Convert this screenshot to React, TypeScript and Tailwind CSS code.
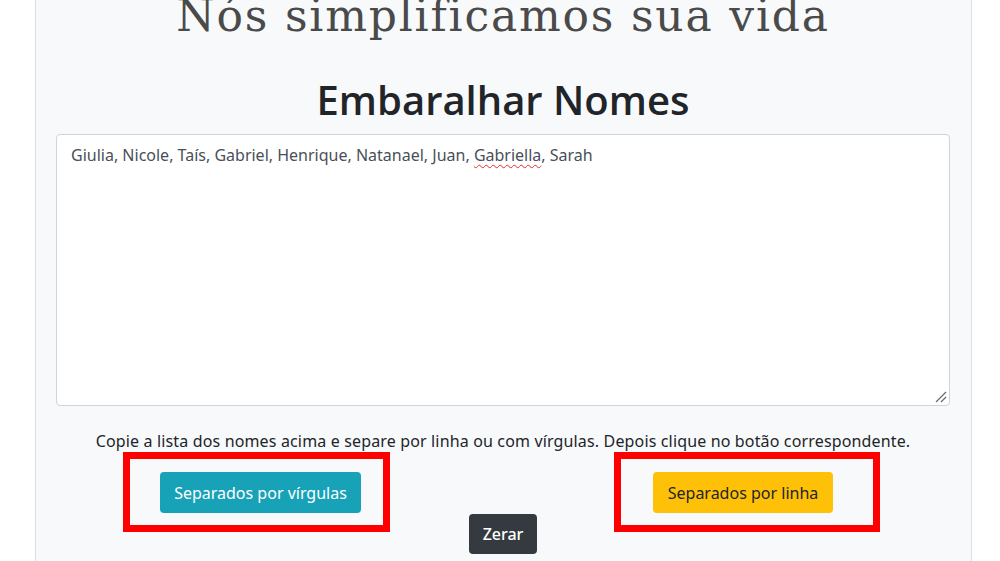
import React from "react";

export default function App() {
  return (
    <div className="w-[1000px] h-[561px] overflow-hidden bg-white">
      <div className="ml-[35px] w-[937px] h-[561px] bg-[#f8f9fa] border-x border-[#dcdfe2] pl-[20px] pr-[21px] flex flex-col">
        <h1
          className="mt-[-9px] h-[50px] leading-[50px] text-center text-[44px] tracking-[1.8px] text-[#4a4a4a] font-normal whitespace-nowrap"
          style={{ fontFamily: '"DejaVu Serif", "Liberation Serif", serif' }}
        >
          Nós simplificamos sua vida
        </h1>
        <h2
          className="mt-[34px] text-center text-[40px] leading-[50px] font-semibold text-[#212529]"
          style={{ fontFamily: '"Open Sans", "Noto Sans", sans-serif' }}
        >
          Embaralhar Nomes
        </h2>
        <div
          className="relative mt-[9px] h-[272px] bg-white border border-[#ced4da] rounded-[4px] px-[14px] pt-[8px] text-[16px] leading-[24px] text-[#495057]"
          style={{ fontFamily: '"Noto Sans", "Open Sans", sans-serif' }}
        >
          Giulia, Nicole, Taís, Gabriel, Henrique, Natanael, Juan,{" "}
          <span className="underline decoration-wavy decoration-[#e03030] decoration-1 underline-offset-[3px]">
            Gabriella
          </span>
          , Sarah
          <svg
            className="absolute right-[2px] bottom-[2px]"
            width="12"
            height="12"
            viewBox="0 0 12 12"
          >
            <line x1="11" y1="1" x2="1" y2="11" stroke="#6b6b6b" strokeWidth="1.2" />
            <line x1="11" y1="6" x2="6" y2="11" stroke="#6b6b6b" strokeWidth="1.2" />
          </svg>
        </div>
        <p
          className="mt-[23px] text-center text-[16px] tracking-[0.15px] leading-[24px] text-[#212529] whitespace-nowrap"
          style={{ fontFamily: '"Noto Sans", "Open Sans", sans-serif' }}
        >
          Copie a lista dos nomes acima e separe por linha ou com vírgulas. Depois clique no botão correspondente.
        </p>
        <div
          className="mt-[19px] flex flex-row items-start"
          style={{ fontFamily: '"Noto Sans", "Open Sans", sans-serif' }}
        >
          <div className="relative ml-[104px]">
            <button className="w-[201px] h-[41px] rounded-[4px] bg-[#17a2b8] text-white text-[16px]">
              Separados por vírgulas
            </button>
            <div className="absolute left-[-37px] top-[-20px] w-[267px] h-[80px] border-[7px] border-[#ff0000] pointer-events-none" />
          </div>
          <div className="relative ml-[292px]">
            <button className="w-[180px] h-[41px] rounded-[4px] bg-[#ffc107] text-[#212529] text-[16px]">
              Separados por linha
            </button>
            <div className="absolute left-[-39px] top-[-20px] w-[266px] h-[80px] border-[7px] border-[#ff0000] pointer-events-none" />
          </div>
        </div>
        <div
          className="mt-[1px] flex justify-center"
          style={{ fontFamily: '"Noto Sans", "Open Sans", sans-serif' }}
        >
          <button className="w-[68px] h-[40px] rounded-[4px] bg-[#343a40] text-white text-[16px] font-medium">
            Zerar
          </button>
        </div>
      </div>
    </div>
  );
}
